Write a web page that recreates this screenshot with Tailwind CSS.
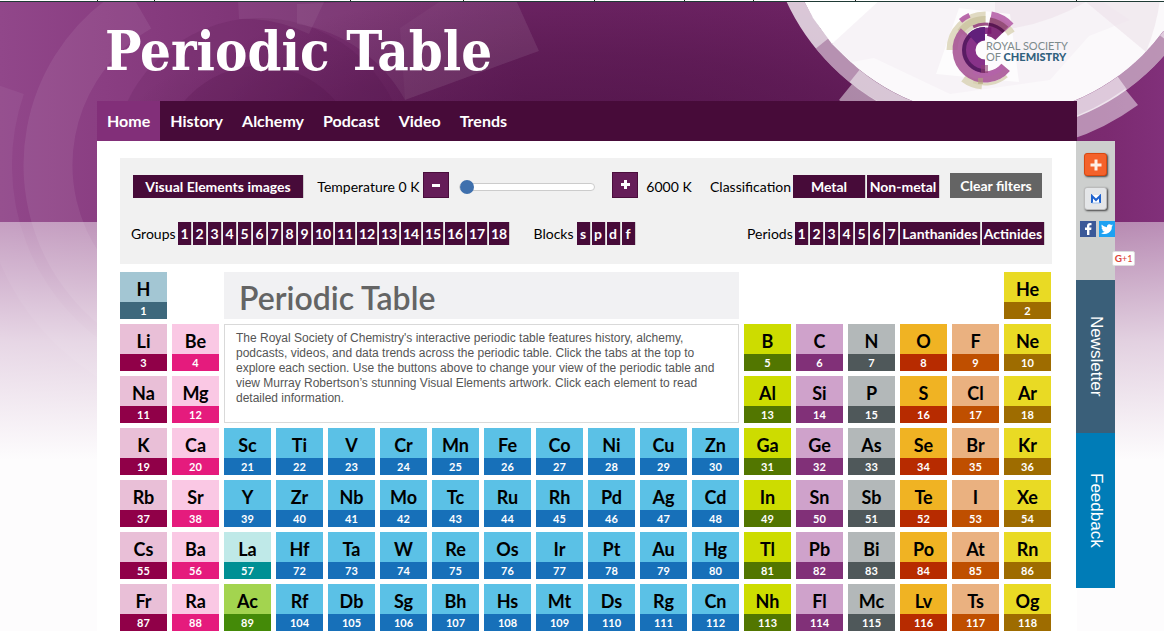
<!DOCTYPE html>
<html lang="en">
<head>
    <meta charset="UTF-8">
    <meta name="viewport" content="width=device-width, initial-scale=1.0">
    <title>Periodic Table - Royal Society of Chemistry</title>
    <script src="https://cdn.jsdelivr.net/npm/@tailwindcss/browser@4"></script>
</head>
<body class="relative min-h-screen overflow-x-hidden bg-[#fdfcfd] font-['Lato','Liberation_Sans',sans-serif] text-sm text-black">

    <!-- Page backdrop -->
    <svg class="absolute inset-0 w-full h-full" viewBox="0 0 1164 631" preserveAspectRatio="xMidYMin slice" aria-hidden="true">
        <defs>
            <linearGradient id="purple" x1="0" y1="0" x2="1" y2="0">
                <stop offset="0" stop-color="#91478a"/>
                <stop offset="0.09" stop-color="#8a3e82"/>
                <stop offset="0.28" stop-color="#783070"/>
                <stop offset="0.45" stop-color="#6c2463"/>
                <stop offset="0.72" stop-color="#6c2262"/>
                <stop offset="0.95" stop-color="#7b2a70"/>
                <stop offset="1" stop-color="#81307a"/>
            </linearGradient>
            <radialGradient id="shade">
                <stop offset="0" stop-color="#3f0a38" stop-opacity="0.6"/>
                <stop offset="0.6" stop-color="#3f0a38" stop-opacity="0.3"/>
                <stop offset="1" stop-color="#3f0a38" stop-opacity="0"/>
            </radialGradient>
            <linearGradient id="fade" x1="0" y1="0" x2="0" y2="1">
                <stop offset="0" stop-color="#fff" stop-opacity="0.45"/>
                <stop offset="0.5" stop-color="#fff" stop-opacity="0.78"/>
                <stop offset="1" stop-color="#fdfcfd"/>
            </linearGradient>
            <clipPath id="band"><rect width="1164" height="101"/></clipPath>
        </defs>
        <rect width="1164" height="460" fill="url(#purple)"/>
        <ellipse cx="590" cy="150" rx="480" ry="160" fill="url(#shade)"/>
        <g fill="none" stroke="#fff">
            <circle cx="230" cy="165" r="182" stroke-width="49" stroke-opacity="0.07" pathLength="360" stroke-dasharray="118 360" transform="rotate(122 230 165)"/>
            <circle cx="230" cy="165" r="234" stroke-width="32" stroke-opacity="0.05" pathLength="360" stroke-dasharray="80 360" transform="rotate(119 230 165)"/>
        </g>
        <g clip-path="url(#band)">
            <circle cx="260" cy="165" r="147" fill="#4f0f45" fill-opacity="0.14"/>
            <circle cx="260" cy="165" r="99" fill="#4f0f45" fill-opacity="0.2"/>
            <path d="M238 0H325L309 34A147 147 0 0 0 239 19Z" fill="#fff" fill-opacity="0.06"/>
            <path d="M297 4L400 0H516L539 51L405 100A150 150 0 0 0 297 24Z" fill="#fff" fill-opacity="0.06"/>
            <path d="M400 28L442 0H516L539 51L405 100Z" fill="#fff" fill-opacity="0.03"/>
        </g>
        <g>
            <path d="M839 100A248 248 0 0 0 1138 105L1125 89A228 228 0 0 1 852 84Z" fill="#fff" fill-opacity="0.48"/>
            <circle cx="993" cy="-95" r="220" fill="none" stroke="#fff" stroke-width="16" stroke-opacity="0.75"/>
            <circle cx="993" cy="-95" r="220" fill="none" stroke="#84407b" stroke-width="16" stroke-opacity="0.4" pathLength="360" stroke-dasharray="12 360" transform="rotate(129 993 -95)"/>
            <circle cx="993" cy="-95" r="220" fill="none" stroke="#84407b" stroke-width="16" stroke-opacity="0.4" pathLength="360" stroke-dasharray="16 360" transform="rotate(38 993 -95)"/>
            <circle cx="993" cy="-95" r="212" fill="#fbf9fb"/>
            <path d="M813 18L832 44L880 0H804Z" fill="#fff"/>
            <path d="M880 0L832 44A212 212 0 0 0 852 62L874 58L950 94L1050 80L1089 36L1130 20L1100 0Z" fill="#f7f3f7"/>
            <path d="M995 0H1160A212 212 0 0 1 1146 52L1086 2Q1040 28 995 30Z" fill="#ece1ea" fill-opacity="0.6"/>
            <path d="M959 8L1010 14L1019 82L936 74Z" fill="#fff" fill-opacity="0.7"/>
        </g>
        <rect y="222" width="1164" height="238" fill="url(#fade)"/>
        <rect y="460" width="1164" height="171" fill="#fdfcfd"/>
    </svg>

    <!-- Top rule -->
    <div class="relative h-[2px] border-b border-[#1f3a35] bg-white">
        <svg class="h-[2px] w-full" viewBox="0 0 1164 2" preserveAspectRatio="none" aria-hidden="true">
            <path d="M97 0h1v1h-1zM154 0h1v1h-1zM350 0h1v1h-1zM463 0h1v1h-1zM594 0h1v1h-1zM684 0h1v1h-1zM753 0h1v1h-1zM855 0h1v1h-1zM1076 0h1v1h-1z" fill="#222"/>
        </svg>
    </div>

    <div class="relative pl-[97px] pr-[87px]">
        <header class="flex h-[99px] items-start justify-between pl-2 pr-1">
            <h1 class="font-['DejaVu_Serif_Condensed','DejaVu_Serif',serif] text-[54px] leading-[98px] font-bold whitespace-nowrap text-white">Periodic Table</h1>
            <a href="#" aria-label="Royal Society of Chemistry">
                <svg class="mt-[3px] h-[90px] w-[130px]" viewBox="943 5 130 90">
                    <g fill="none" stroke-opacity="0.9">
                        <g stroke="#d5cfae">
                            <circle cx="985" cy="50" r="33" stroke-width="11" stroke-opacity="0.75" pathLength="360" stroke-dasharray="91 360" transform="rotate(180 985 50)"/>
                            <circle cx="985" cy="50" r="29" stroke-width="10" stroke="#bdb689" stroke-opacity="0.5" pathLength="360" stroke-dasharray="55 360" transform="rotate(216 985 50)"/>
                            <circle cx="985" cy="50" r="31" stroke-width="8" stroke-opacity="0.75" pathLength="360" stroke-dasharray="32 360" transform="rotate(296 985 50)"/>
                            <circle cx="985" cy="50" r="35" stroke-width="9" stroke-opacity="0.75" pathLength="360" stroke-dasharray="32 360" transform="rotate(95 985 50)"/>
                            <circle cx="985" cy="50" r="34" stroke-width="3" stroke-opacity="0.75" pathLength="360" stroke-dasharray="60 360" transform="rotate(50 985 50)"/>
                        </g>
                        <circle cx="985" cy="50" r="27" stroke="#a85797" stroke-width="11" pathLength="360" stroke-dasharray="182 360" transform="rotate(40 985 50)"/>
                        <circle cx="985" cy="50" r="24" stroke="#b463a8" stroke-width="5" pathLength="360" stroke-dasharray="76 360" transform="rotate(42 985 50)"/>
                        <circle cx="985" cy="50" r="26" stroke="#943f7d" stroke-width="3" pathLength="360" stroke-dasharray="34 360" transform="rotate(243 985 50)"/>
                        <circle cx="985" cy="50" r="33" stroke="#b660a8" stroke-width="12" pathLength="360" stroke-dasharray="37 360" transform="rotate(280 985 50)"/>
                        <circle cx="985" cy="50" r="30" stroke="#914b73" stroke-width="6" pathLength="360" stroke-dasharray="36 360" transform="rotate(279 985 50)"/>
                        <circle cx="985" cy="50" r="38" stroke="#b15aa3" stroke-width="5" pathLength="360" stroke-dasharray="16 360" transform="rotate(230 985 50)"/>
                        <circle cx="985" cy="50" r="16" stroke="#7b1c7c" stroke-width="13" pathLength="360" stroke-dasharray="180 360" transform="rotate(90 985 50)"/>
                        <circle cx="985" cy="50" r="21" stroke="#54195f" stroke-width="4" pathLength="360" stroke-dasharray="180 360" transform="rotate(90 985 50)"/>
                        <path d="M985 27V40A10 10 0 0 0 977 44L968 34A23 23 0 0 1 985 27Z" fill="#61207b" stroke="none"/>
                        <circle cx="985" cy="50" r="21" stroke="#77186d" stroke-width="13" pathLength="360" stroke-dasharray="38 360" transform="rotate(278 985 50)"/>
                        <circle cx="985" cy="50" r="26" stroke="#54164c" stroke-width="3" pathLength="360" stroke-dasharray="38 360" transform="rotate(278 985 50)"/>
                        <path d="M981 65h7v8h-7z" fill="#8f3f72" fill-opacity="0.6" stroke="none"/>
                        <path d="M978 78h5v6h-5z" fill="#b3a87c" fill-opacity="0.6" stroke="none"/>
                    </g>
                    <g font-family="Lato, sans-serif" font-size="11">
                        <text x="986" y="50" fill="#7d8a8c">ROYAL SOCIETY</text>
                        <text x="986" y="61" fill="#7d8a8c">OF <tspan font-weight="900" fill="#31607d">CHEMISTRY</tspan></text>
                    </g>
                </svg>
            </a>
        </header>
        <nav class="flex h-10 gap-px bg-[#470b39] text-base leading-[39px] font-bold text-white">
            <a href="#" class="bg-[#822f79] px-[10px]">Home</a>
            <a href="#" class="px-[9px]">History</a>
            <a href="#" class="px-[9px]">Alchemy</a>
            <a href="#" class="px-[9px]">Podcast</a>
            <a href="#" class="px-[9px]">Video</a>
            <a href="#" class="px-[9px]">Trends</a>
        </nav>
    </div>

    <div class="relative flex items-start pl-[97px] pr-[49px]">
        <main class="flex-1 bg-white pt-[17px]">

            <!-- Filters -->
            <form class="mr-[25px] ml-[23px] flex h-[106px] flex-col gap-6 bg-[#f1f1f1] pt-[14px] pr-2 pl-[11px] whitespace-nowrap">
                <div class="flex h-[26px] items-end justify-between pl-[2px] pr-[2px]">
                    <button type="button" class="h-[23px] w-[170px] bg-[#470b39] font-bold text-white shadow-[1px_0_0_#ccc]">Visual Elements images</button>
                    <div class="mr-1 flex items-end">
                        <label for="temperature" class="w-[106px] leading-[23px]">Temperature 0 K</label>
                        <button type="button" aria-label="Lower temperature" class="flex size-[26px] items-center justify-center border border-[#4a0d3c] bg-[#651d58]">
                            <svg class="size-3" viewBox="0 0 12 12"><path d="M2 5h8v3H2z" fill="#fff"/></svg>
                        </button>
                        <input type="range" id="temperature" min="0" max="6000" value="0" class="mx-[10px] mb-[7px] h-2 w-[136px] appearance-none rounded-sm border border-[#ccc] bg-white [&::-webkit-slider-thumb]:size-[14px] [&::-webkit-slider-thumb]:appearance-none [&::-webkit-slider-thumb]:rounded-full [&::-webkit-slider-thumb]:bg-[#3f70ad]">
                        <button type="button" aria-label="Raise temperature" class="ml-[7px] flex size-[26px] items-center justify-center border border-[#4a0d3c] bg-[#651d58]">
                            <svg class="size-3" viewBox="0 0 12 12"><path d="M5 1h3v3h3v3H8v3H5V7H2V4h3z" fill="#fff"/></svg>
                        </button>
                        <span class="ml-2 leading-[23px]">6000 K</span>
                    </div>
                    <div class="flex items-end gap-[2px]">
                        <span class="w-[81px] leading-[23px]">Classification</span>
                        <button type="button" class="h-[23px] w-[72px] bg-[#470b39] font-bold text-white shadow-[1px_0_0_#ccc]">Metal</button>
                        <button type="button" class="h-[23px] w-[72px] bg-[#470b39] font-bold text-white shadow-[1px_0_0_#ccc]">Non-metal</button>
                        <button type="reset" class="ml-[9px] h-[25px] w-[92px] bg-[#646464] font-bold text-white">Clear filters</button>
                    </div>
                </div>
                <div class="flex h-[23px] justify-between">
                    <div class="flex gap-[2px]" id="groups"><span class="w-[45px] leading-[23px]">Groups</span></div>
                    <div class="mr-[88px] flex gap-[2px]" id="blocks"><span class="w-[41px] leading-[23px]">Blocks</span></div>
                    <div class="flex gap-[2px]" id="periods"><span class="w-[46px] leading-[23px]">Periods</span></div>
                </div>
            </form>

            <table class="mt-[3px] mr-[21px] -mb-[5px] ml-[18px] w-[calc(100%-39px)] table-fixed border-separate border-spacing-[5px]">
                <tbody id="elements"></tbody>
            </table>
        </main>

        <!-- Share and feedback tabs -->
        <aside class="relative -ml-px w-[39px] flex-none">
            <div class="flex h-[139px] flex-col items-center gap-[11px] bg-[#cdcfce] pt-3">
                <button type="button" aria-label="Share" class="flex size-[23px] items-center justify-center rounded-[3px] border border-[#d9480f] bg-[#f4622b] shadow-[1px_1px_2px_#444]">
                    <svg class="size-3" viewBox="0 0 12 12"><path d="M4.500 0.500h3v4h4v3h-4v4h-3v-4h-4v-3h4z" fill="#fdeee6"/></svg>
                </button>
                <button type="button" aria-label="Gmail" class="flex size-[23px] items-center justify-center rounded-[3px] border border-[#bbb] bg-[#e4e6e8] shadow-[1px_1px_2px_#444]">
                    <svg class="h-[10px] w-3" viewBox="0 0 12 10"><path d="M1 1h10v8H1z" fill="#fff"/><path d="M2 9V2l4 4 4-4v7" fill="none" stroke="#1f63cf" stroke-width="2"/><path d="M2 9h8" stroke="#9dbdea"/></svg>
                </button>
                <div class="flex gap-[3px] self-end">
                    <button type="button" aria-label="Facebook" class="size-4 bg-[#3b5998]">
                        <svg class="size-4" viewBox="0 0 16 16"><path d="M7 14V9H5V6.600h2V5c0-2 1.200-3 3-3h1.500v2.300h-1.100c-.8 0-1 .4-1 1v1.300h2.100L11.200 9H9.400v5z" fill="#fff"/></svg>
                    </button>
                    <button type="button" aria-label="Twitter" class="size-4 bg-[#1da1f2]">
                        <svg class="size-4" viewBox="0 0 16 16"><path d="M14 4.300c-.4.200-.9.300-1.400.4.500-.3.900-.8 1.100-1.400-.5.300-1 .5-1.600.6a2.500 2.500 0 0 0-4.200 2.300C5.800 6.100 4 5.100 2.800 3.600c-.7 1.200-.3 2.600.8 3.300-.4 0-.8-.1-1.100-.3 0 1.200.8 2.300 2 2.500-.4.100-.7.100-1.100 0 .3 1 1.200 1.700 2.300 1.700A5 5 0 0 1 2 11.900 7 7 0 0 0 12.800 5.600c.5-.3.900-.8 1.200-1.300z" fill="#fff"/></svg>
                    </button>
                </div>
            </div>
            <button type="button" aria-label="Google +1" class="absolute top-[110px] left-9 h-[15px] w-[23px] rounded-xs border border-[#ddd] bg-white text-[10px] leading-[13px] font-bold text-[#db4437]">G<span class="text-[9px] font-normal">+1</span></button>
            <a href="#" class="flex h-[153px] w-full items-center justify-center bg-[#3a5f79] font-['Liberation_Sans',sans-serif] text-[17px] text-white [writing-mode:vertical-rl]">Newsletter</a>
            <a href="#" class="flex h-[155px] w-full items-center justify-center bg-[#007cb7] font-['Liberation_Sans',sans-serif] text-[17px] text-white [writing-mode:vertical-rl]">Feedback</a>
        </aside>
    </div>

    <script>
        const colours = {
            hydrogen: ['bg-[#a3c6d3]', 'bg-[#3e687c]'],
            1: ['bg-[#e9bfd7]', 'bg-[#900048]'],
            2: ['bg-[#fac8e4]', 'bg-[#e51b7d]'],
            transition: ['bg-[#5bc1e6]', 'bg-[#1770b9]'],
            lanthanum: ['bg-[#bfe9e8]', 'bg-[#009094]'],
            actinium: ['bg-[#a3d44f]', 'bg-[#448a08]'],
            13: ['bg-[#cddc00]', 'bg-[#527600]'],
            14: ['bg-[#cfa2cb]', 'bg-[#813078]'],
            15: ['bg-[#b3b8b9]', 'bg-[#4f585a]'],
            16: ['bg-[#f0b323]', 'bg-[#b72b00]'],
            17: ['bg-[#eab180]', 'bg-[#bf4f00]'],
            18: ['bg-[#e9da24]', 'bg-[#9e6c00]']
        };

        // first atomic number of each row, then the symbols
        const periods = [
            [1, 'H He'],
            [3, 'Li Be B C N O F Ne'],
            [11, 'Na Mg Al Si P S Cl Ar'],
            [19, 'K Ca Sc Ti V Cr Mn Fe Co Ni Cu Zn Ga Ge As Se Br Kr'],
            [37, 'Rb Sr Y Zr Nb Mo Tc Ru Rh Pd Ag Cd In Sn Sb Te I Xe'],
            [55, 'Cs Ba La Hf Ta W Re Os Ir Pt Au Hg Tl Pb Bi Po At Rn'],
            [87, 'Fr Ra Ac Rf Db Sg Bh Hs Mt Ds Rg Cn Nh Fl Mc Lv Ts Og']
        ];

        const heading = `<td colspan="10" class="bg-[#f1f1f3] p-0 pl-[15px]">
            <h2 class="pt-1 text-[32px] leading-[43px] font-semibold text-[#646464]">Periodic Table</h2></td>`;
        const intro = `<td colspan="10" rowspan="2" class="border border-[#d9d9d9] p-0 align-top">
            <p class="px-[11px] pt-[6px] font-['Liberation_Sans',sans-serif] text-xs leading-[15px] text-[#555]">The Royal Society of Chemistry's interactive periodic table features history, alchemy, podcasts, videos, and data trends across the periodic table. Click the tabs at the top to explore each section. Use the buttons above to change your view of the periodic table and view Murray Robertson’s stunning Visual Elements artwork. Click each element to read detailed information.</p></td>`;

        function colourFor(symbol, group) {
            if (symbol === 'H') return colours.hydrogen;
            if (symbol === 'La') return colours.lanthanum;
            if (symbol === 'Ac') return colours.actinium;
            return colours[group] || colours.transition;
        }

        function elementCell(symbol, number, group) {
            const [top, bottom] = colourFor(symbol, group);
            return `<td class="p-0"><a href="#" class="block text-center font-bold">
                <span class="block h-[30px] pt-[2px] text-lg leading-[30px] ${top}">${symbol}</span>
                <span class="relative block h-[17px] text-[11px] leading-[17px] text-white ${bottom}">${number}</span></a></td>`;
        }

        document.getElementById('elements').innerHTML = periods.map(([first, list], row) => {
            const symbols = list.split(' ');
            const left = row === 0 ? 1 : 2;
            let html = '';
            symbols.forEach((symbol, i) => {
                if (row < 3 && i === left) {
                    if (row === 0) html += '<td class="p-0"></td>' + heading + '<td colspan="5" class="p-0"></td>';
                    if (row === 1) html += intro;
                }
                let number = first + i;
                if (row > 4 && i > 2) number += 14;
                const group = i < left ? i + 1 : 18 - (symbols.length - 1 - i);
                html += elementCell(symbol, number, group);
            });
            return '<tr>' + html + '</tr>';
        }).join('');

        function addFilters(id, labels) {
            const widths = { Lanthanides: 'w-[80px]', Actinides: 'w-[62px]' };
            labels.forEach(label => {
                const width = widths[label] || (label > 9 ? 'w-[20px]' : 'w-[13px]');
                document.getElementById(id).insertAdjacentHTML('beforeend',
                    `<button type="button" class="h-[23px] bg-[#470b39] text-center font-bold text-white shadow-[1px_0_0_#ccc] ${width}">${label}</button>`);
            });
        }

        addFilters('groups', Array.from({ length: 18 }, (_, i) => i + 1));
        addFilters('blocks', ['s', 'p', 'd', 'f']);
        addFilters('periods', [1, 2, 3, 4, 5, 6, 7, 'Lanthanides', 'Actinides']);
    </script>
</body>
</html>
